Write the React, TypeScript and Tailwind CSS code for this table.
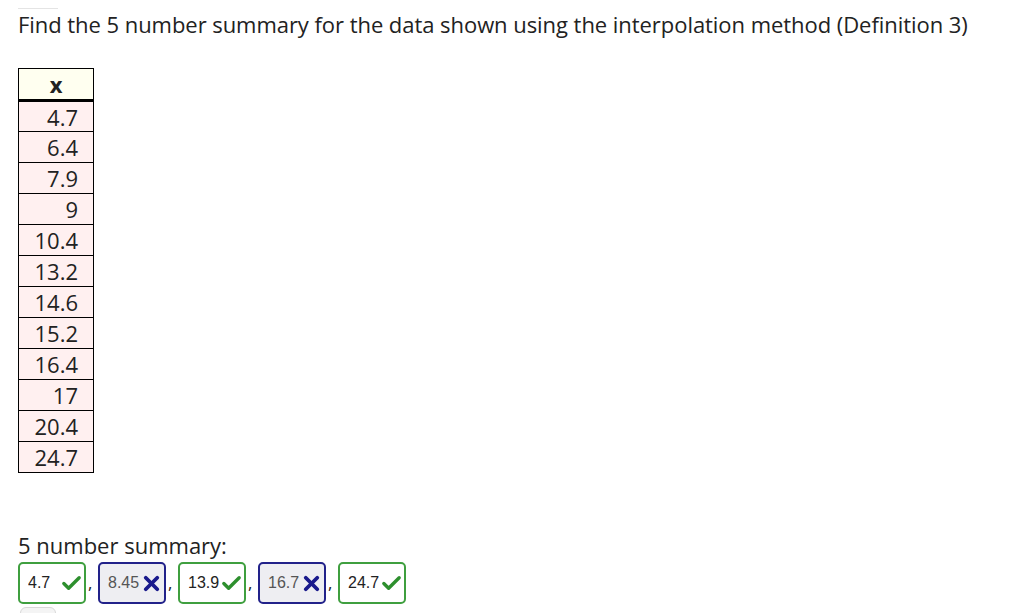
import { Check, X } from "lucide-react";

const data = ["4.7", "6.4", "7.9", "9", "10.4", "13.2", "14.6", "15.2", "16.4", "17", "20.4", "24.7"];

const answers = [
  { value: "4.7", ok: true },
  { value: "8.45", ok: false },
  { value: "13.9", ok: true },
  { value: "16.7", ok: false },
  { value: "24.7", ok: true },
];

function AnswerBox({ value, ok }: { value: string; ok: boolean }) {
  return (
    <div
      className={
        ok
          ? "flex items-center h-[42px] w-[68px] rounded-[5px] border-2 border-[#3f9f3f] bg-white pl-[8px] pr-[1px]"
          : "flex items-center h-[42px] w-[68px] rounded-[5px] border-2 border-[#22228a] bg-[#eeeef2] pl-[8px] pr-[1px]"
      }
    >
      <span
        className={
          ok
            ? "flex-1 min-w-0 overflow-hidden whitespace-nowrap font-['Liberation_Sans',Arial,sans-serif] text-[16px] text-[#222]"
            : "flex-1 min-w-0 overflow-hidden whitespace-nowrap font-['Liberation_Sans',Arial,sans-serif] text-[16px] text-[#555]"
        }
      >
        {value}
      </span>
      {ok ? (
        <Check className="w-[23px] h-[23px] text-[#2d8f2d] shrink-0" strokeWidth={3.5} />
      ) : (
        <X className="w-[23px] h-[23px] text-[#1a1a8c] shrink-0" strokeWidth={4} />
      )}
    </div>
  );
}

export default function App() {
  return (
    <div className="w-[1024px] h-[613px] overflow-hidden bg-white text-[#222] font-['Open_Sans',sans-serif]">
      <div className="px-[18px] pt-[10px]">
        <div className="w-[40px] h-[1px] bg-[#e4e4e4] -mt-[2px] mb-[1px]" />
        <p className="text-[22px] leading-[28px] tracking-[-0.05px]">
          Find the 5 number summary for the data shown using the interpolation method (Definition 3)
        </p>

        <table className="mt-[30px] border-collapse w-[76px] text-[22px]">
          <thead>
            <tr>
              <th className="h-[32px] border border-black border-b-[3px] bg-[#fffff0] font-bold text-center leading-none">
                x
              </th>
            </tr>
          </thead>
          <tbody>
            {data.map((d) => (
              <tr key={d}>
                <td className="h-[31px] border border-black bg-[#fff0f0] text-right pr-[15px] leading-none">
                  {d}
                </td>
              </tr>
            ))}
          </tbody>
        </table>

        <p className="mt-[58px] text-[22px] leading-[28px]">5 number summary:</p>

        <div className="mt-[3px] flex items-center">
          {answers.map((a, i) => (
            <div key={i} className="flex items-center">
              <AnswerBox value={a.value} ok={a.ok} />
              {i < answers.length - 1 && (
                <span className="w-[12px] pl-[2px] text-[17px] leading-[20px]">,</span>
              )}
            </div>
          ))}
        </div>

        <div className="mt-[3px] ml-[2px] w-[36px] h-[20px] rounded-[6px] border border-[#d8d8d8] bg-[#f4f4f4]" />
      </div>
    </div>
  );
}
